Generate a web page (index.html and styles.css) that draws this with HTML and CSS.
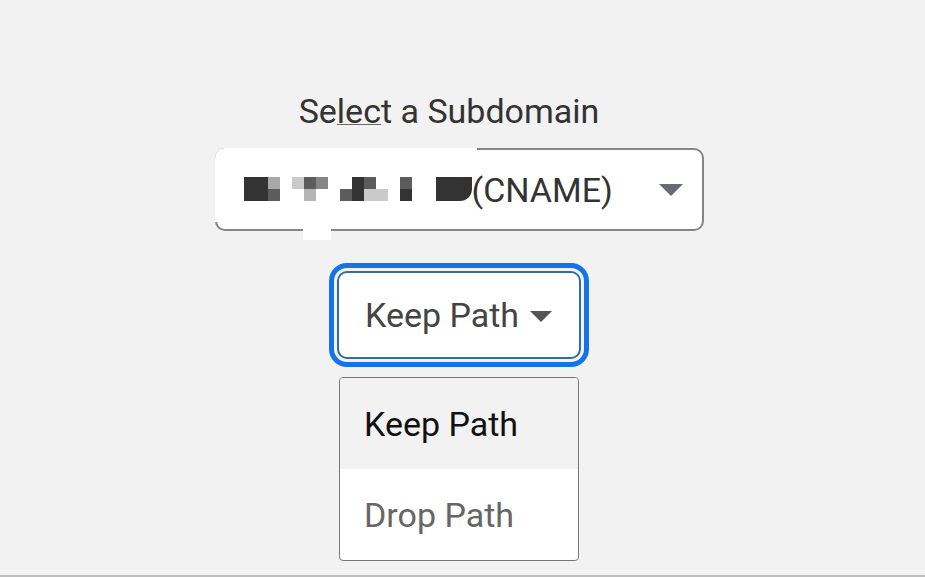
FILE: index.html
```html
<!DOCTYPE html>
<html lang="en">
<head>
    <meta charset="UTF-8">
    <meta name="viewport" content="width=device-width, initial-scale=1.0">
    <title>Select a Subdomain</title>
    <link rel="stylesheet" href="styles.css">
</head>
<body>
    <div class="page">
        <h1 class="title">Se<span class="ul">lec</span>t a Subdomain</h1>

        <div class="select domain-select">
            <span class="redact"></span>
            <span class="redact-notch"></span>
            <span class="pixels">
                <i class="d"></i><i class="d"></i><i class="g3"></i><i></i><i class="g1"></i><i class="g5"></i><i class="g4"></i><i></i><i></i><i class="d"></i><i class="g5"></i><i></i><i></i><i class="g5"></i><i></i><i></i><i class="d"></i><i class="d"></i><i class="d"></i>
                <i class="d"></i><i class="d"></i><i class="g5"></i><i></i><i></i><i class="g2"></i><i></i><i></i><i class="g5"></i><i class="d"></i><i class="g1"></i><i class="g1"></i><i></i><i class="d"></i><i></i><i></i><i class="d"></i><i class="d"></i><i class="d curve"></i>
            </span>
            <span class="select-text">(CNAME)</span>
            <svg class="arrow big" width="24" height="12" viewBox="0 0 24 12"><polygon points="0,0 24,0 12,12"/></svg>
        </div>

        <div class="select path-select">
            <span class="select-text">Keep Path</span>
            <svg class="arrow" width="22" height="11" viewBox="0 0 22 11"><polygon points="0,0 22,0 11,11"/></svg>
        </div>

        <ul class="menu">
            <li class="menu-item active">Keep Path</li>
            <li class="menu-item">Drop Path</li>
        </ul>
    </div>
</body>
</html>
```

FILE: styles.css
```css
body {
    margin: 0;
    padding: 0;
    background-color: #f2f2f2;
    color: #333;
    font-family: Roboto, "Noto Sans", sans-serif;
}
.page {
    height: 577px;
    box-sizing: border-box;
    border-bottom: 2px solid #bdbdbd;
    padding: 91px 7px 0 0;
    display: flex;
    flex-direction: column;
    align-items: center;
}
.title {
    margin: 0 20px 0 0;
    font-size: 34px;
    line-height: 40px;
    font-weight: 400;
    color: #333;
}
.ul {
    text-decoration: underline;
    text-decoration-color: #666;
    text-decoration-thickness: 1px;
}
.select {
    position: relative;
    display: flex;
    align-items: center;
    box-sizing: border-box;
    background: #fff;
    font-size: 34px;
}
.domain-select {
    margin-top: 17px;
    width: 489px;
    height: 83px;
    border: 2px solid #858585;
    border-radius: 10px;
    padding: 0 19px 0 27px;
    color: #333;
}
.redact {
    position: absolute;
    left: -2px;
    top: -2px;
    width: 262px;
    height: 74px;
    background: #fff;
    border-top-left-radius: 10px;
}
.redact-notch {
    position: absolute;
    left: 86px;
    top: 70px;
    width: 28px;
    height: 20px;
    background: #fff;
}
.pixels {
    position: relative;
    display: grid;
    grid-template-columns: repeat(19, 12px);
    grid-auto-rows: 12px;
    margin-top: -2px;
}
.pixels i.d { background: #333; }
.pixels i.g1 { background: #cacaca; }
.pixels i.g2 { background: #b5b5b5; }
.pixels i.g3 { background: #a8a8a8; }
.pixels i.g4 { background: #868686; }
.pixels i.g5 { background: #5c5c5c; }
.pixels i.curve { border-bottom-right-radius: 12px; }
.select-text {
    position: relative;
    flex: 1;
}
.arrow {
    fill: #686b70;
}
.path-select {
    margin-top: 40px;
    width: 244px;
    height: 88px;
    border: 2px solid #336d98;
    border-radius: 10px;
    outline: 5px solid #1273eb;
    outline-offset: 3px;
    padding: 0 26px 0 26px;
    color: #444;
}
.path-select .select-text {
    flex: none;
    margin-right: 11px;
}
.path-select .arrow {
    fill: #555;
    margin-top: 2px;
}
.menu {
    list-style: none;
    margin: 18px 0 0 0;
    padding: 0;
    width: 240px;
    box-sizing: border-box;
    border: 1.5px solid #777;
    border-radius: 4px;
    background: #fff;
    overflow: hidden;
}
.menu-item {
    height: 91px;
    display: flex;
    align-items: center;
    padding-left: 24px;
    font-size: 34px;
    color: #666;
}
.menu-item.active {
    background: #f2f2f2;
    color: #111;
}
```
